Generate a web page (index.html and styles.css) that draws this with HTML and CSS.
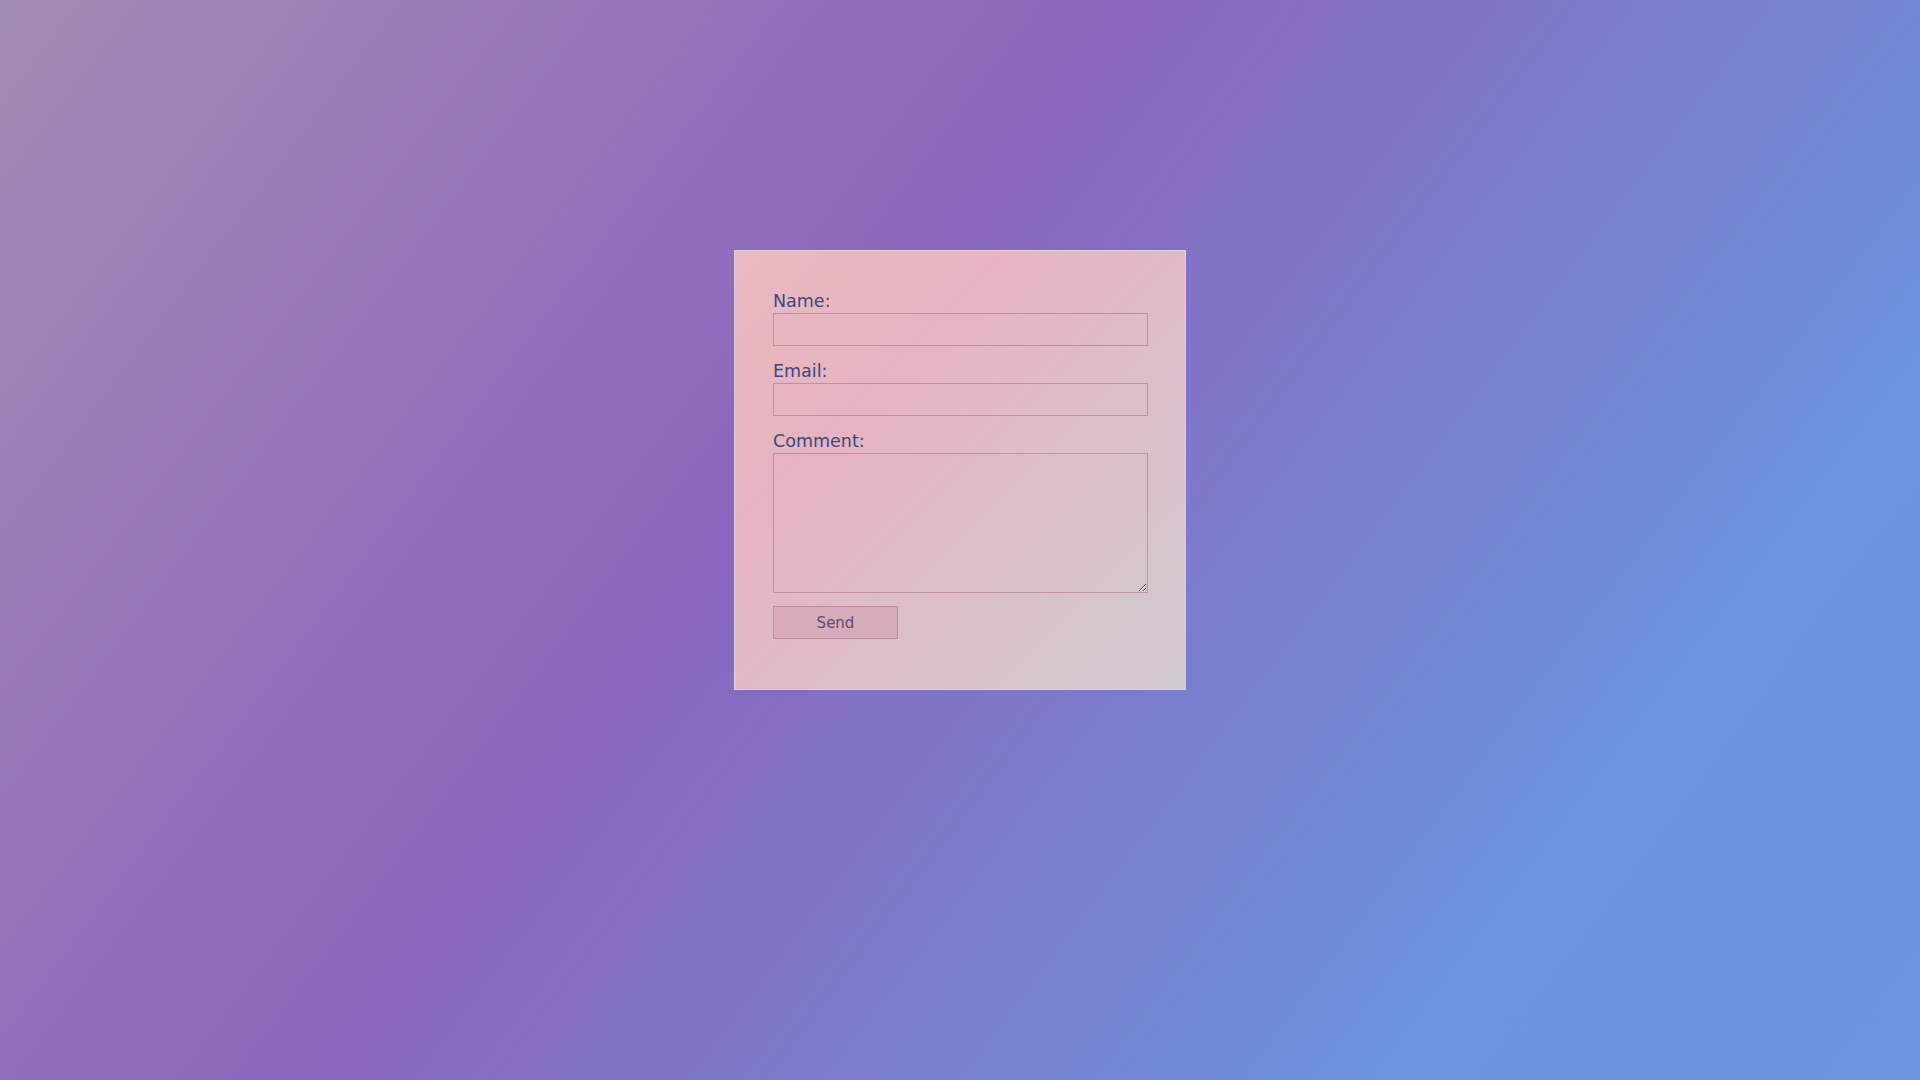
FILE: index.html
```html
<!DOCTYPE html>
<html lang="en">
<head>
<meta charset="utf-8">
<title>Contact</title>
<link rel="stylesheet" href="styles.css">
</head>
<body>
<form class="card">
  <label class="label" for="name">Name:</label>
  <input class="field" id="name" type="text">
  <label class="label" for="email">Email:</label>
  <input class="field" id="email" type="email">
  <label class="label" for="comment">Comment:</label>
  <textarea class="field area" id="comment"></textarea>
  <button class="send" type="button">Send</button>
</form>
</body>
</html>
```

FILE: styles.css
```css
html, body {
  margin: 0;
  padding: 0;
  height: 100%;
}

body {
  background: linear-gradient(127deg, #a38cb3 0%, #8a66bc 41%, #6c93dc 80%, #6b94dc 100%);
  font-family: "DejaVu Sans", Verdana, sans-serif;
  overflow: hidden;
}

.card {
  box-sizing: border-box;
  width: 452px;
  margin: 250px auto 0;
  padding: 40px 37px 50px 38px;
  border: 1px solid rgba(235, 215, 222, 0.55);
  background: linear-gradient(135deg, #e9bac1 0%, #e5b4c0 30%, #ddbec9 60%, #d0cbd4 100%);
  display: flex;
  flex-direction: column;
  align-items: flex-start;
}

.label {
  display: block;
  font-size: 17.5px;
  line-height: 20px;
  color: #3b4a7e;
  margin-bottom: 2px;
}

.field {
  box-sizing: border-box;
  display: block;
  width: 375px;
  height: 33px;
  margin: 0 0 15px;
  padding: 4px 6px;
  border: 1px solid rgba(155, 105, 130, 0.5);
  border-radius: 0;
  background: transparent;
  font-family: "DejaVu Sans", Verdana, sans-serif;
  font-size: 15px;
  color: #3b4a7e;
  outline: none;
}

.area {
  height: 140px;
  margin-bottom: 13px;
  resize: both;
}

.send {
  box-sizing: border-box;
  width: 125px;
  height: 33px;
  margin: 0;
  padding: 0;
  border: 1px solid rgba(155, 105, 130, 0.45);
  border-radius: 0;
  background: rgba(195, 140, 160, 0.32);
  font-family: "DejaVu Sans", Verdana, sans-serif;
  font-size: 15px;
  color: #654a6e;
  cursor: pointer;
}
```
